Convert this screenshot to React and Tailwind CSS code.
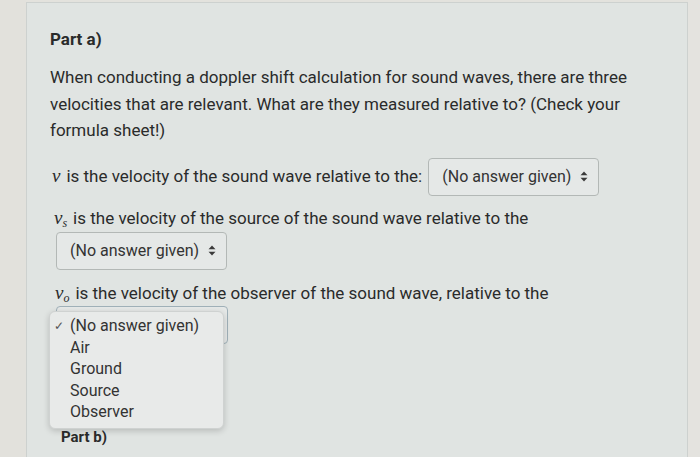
import React from 'react';

const Updown = () => (
  <svg width="8" height="11" viewBox="0 0 8 11" className="ml-[9px] shrink-0">
    <path d="M4 0.5 L7.5 4.2 H0.5 Z" fill="#3a3a3a" />
    <path d="M4 10.5 L7.5 6.8 H0.5 Z" fill="#3a3a3a" />
  </svg>
);

const Select = ({ className = '' }) => (
  <div className={`flex items-center shrink-0 whitespace-nowrap w-[171px] h-[38px] px-[13px] border border-[#b3b8b6] rounded-[4px] bg-[#e5e8e7] text-[16px] text-[#333] ${className}`}>
    (No answer given)
    <Updown />
  </div>
);

const V = ({ sub }) => (
  <span className="font-['Liberation_Serif',serif] italic text-[19px] mr-[6px]">
    v{sub && <sub className="text-[12px] italic">{sub}</sub>}
  </span>
);

const options = ['(No answer given)', 'Air', 'Ground', 'Source', 'Observer'];

export default function App() {
  return (
    <div className="flex w-[700px] h-[457px] overflow-hidden bg-[#e3e2dd] font-['Roboto',sans-serif] text-[#2a2b2b]">
      <div className="w-[26px] shrink-0 bg-[#e2e1dc]" />
      <div className="flex-1 mt-[2px] border-l border-t border-r border-[#cdd1cf] bg-[#e0e4e2] pl-[23px] pt-[24px]">
        <div className="text-[17px] font-bold leading-[24px]">Part a)</div>
        <p className="mt-[13px] text-[17px] leading-[26.5px] w-[600px]">
          When conducting a doppler shift calculation for sound waves, there are three velocities that are relevant. What are they measured relative to? (Check your formula sheet!)
        </p>
        <div className="mt-[14px] flex items-center text-[17px] ml-[2px] whitespace-nowrap">
          <V />
          is the velocity of the sound wave relative to the:
          <Select className="ml-[6px]" />
        </div>
        <div className="mt-[9px] leading-[26px] text-[17px] ml-[4px]">
          <V sub="s" />
          is the velocity of the source of the sound wave relative to the
        </div>
        <Select className="mt-[1px] ml-[6px]" />
        <div className="mt-[10px] leading-[26px] text-[17px] ml-[5px]">
          <V sub="o" />
          is the velocity of the observer of the sound wave, relative to the
        </div>
        <div className="relative ml-[6px]">
          <div className="w-[172px] h-[38px] border border-[#9fb0b8] rounded-[4px] bg-[#e5e8e7]" />
          <div className="absolute left-[-7px] top-[5px] w-[175px] h-[118px] pt-[4px] rounded-[6px] border border-[#cfd2d1] bg-[#e8eae9] shadow-[0_2px_6px_rgba(0,0,0,0.18)] text-[16px] text-[#333]">
            {options.map((o, i) => (
              <div key={o} className="flex items-center h-[21.5px] whitespace-nowrap">
                <span className="w-[20px] pl-[4px] text-[12px] text-[#555]">{i === 0 ? '✓' : ''}</span>
                {o}
              </div>
            ))}
          </div>
        </div>
        <div className="mt-[83px] ml-[11px] text-[15px] font-bold leading-[20px]">Part b)</div>
      </div>
      <div className="w-[12px] shrink-0 bg-[#e4e3df]" />
    </div>
  );
}
